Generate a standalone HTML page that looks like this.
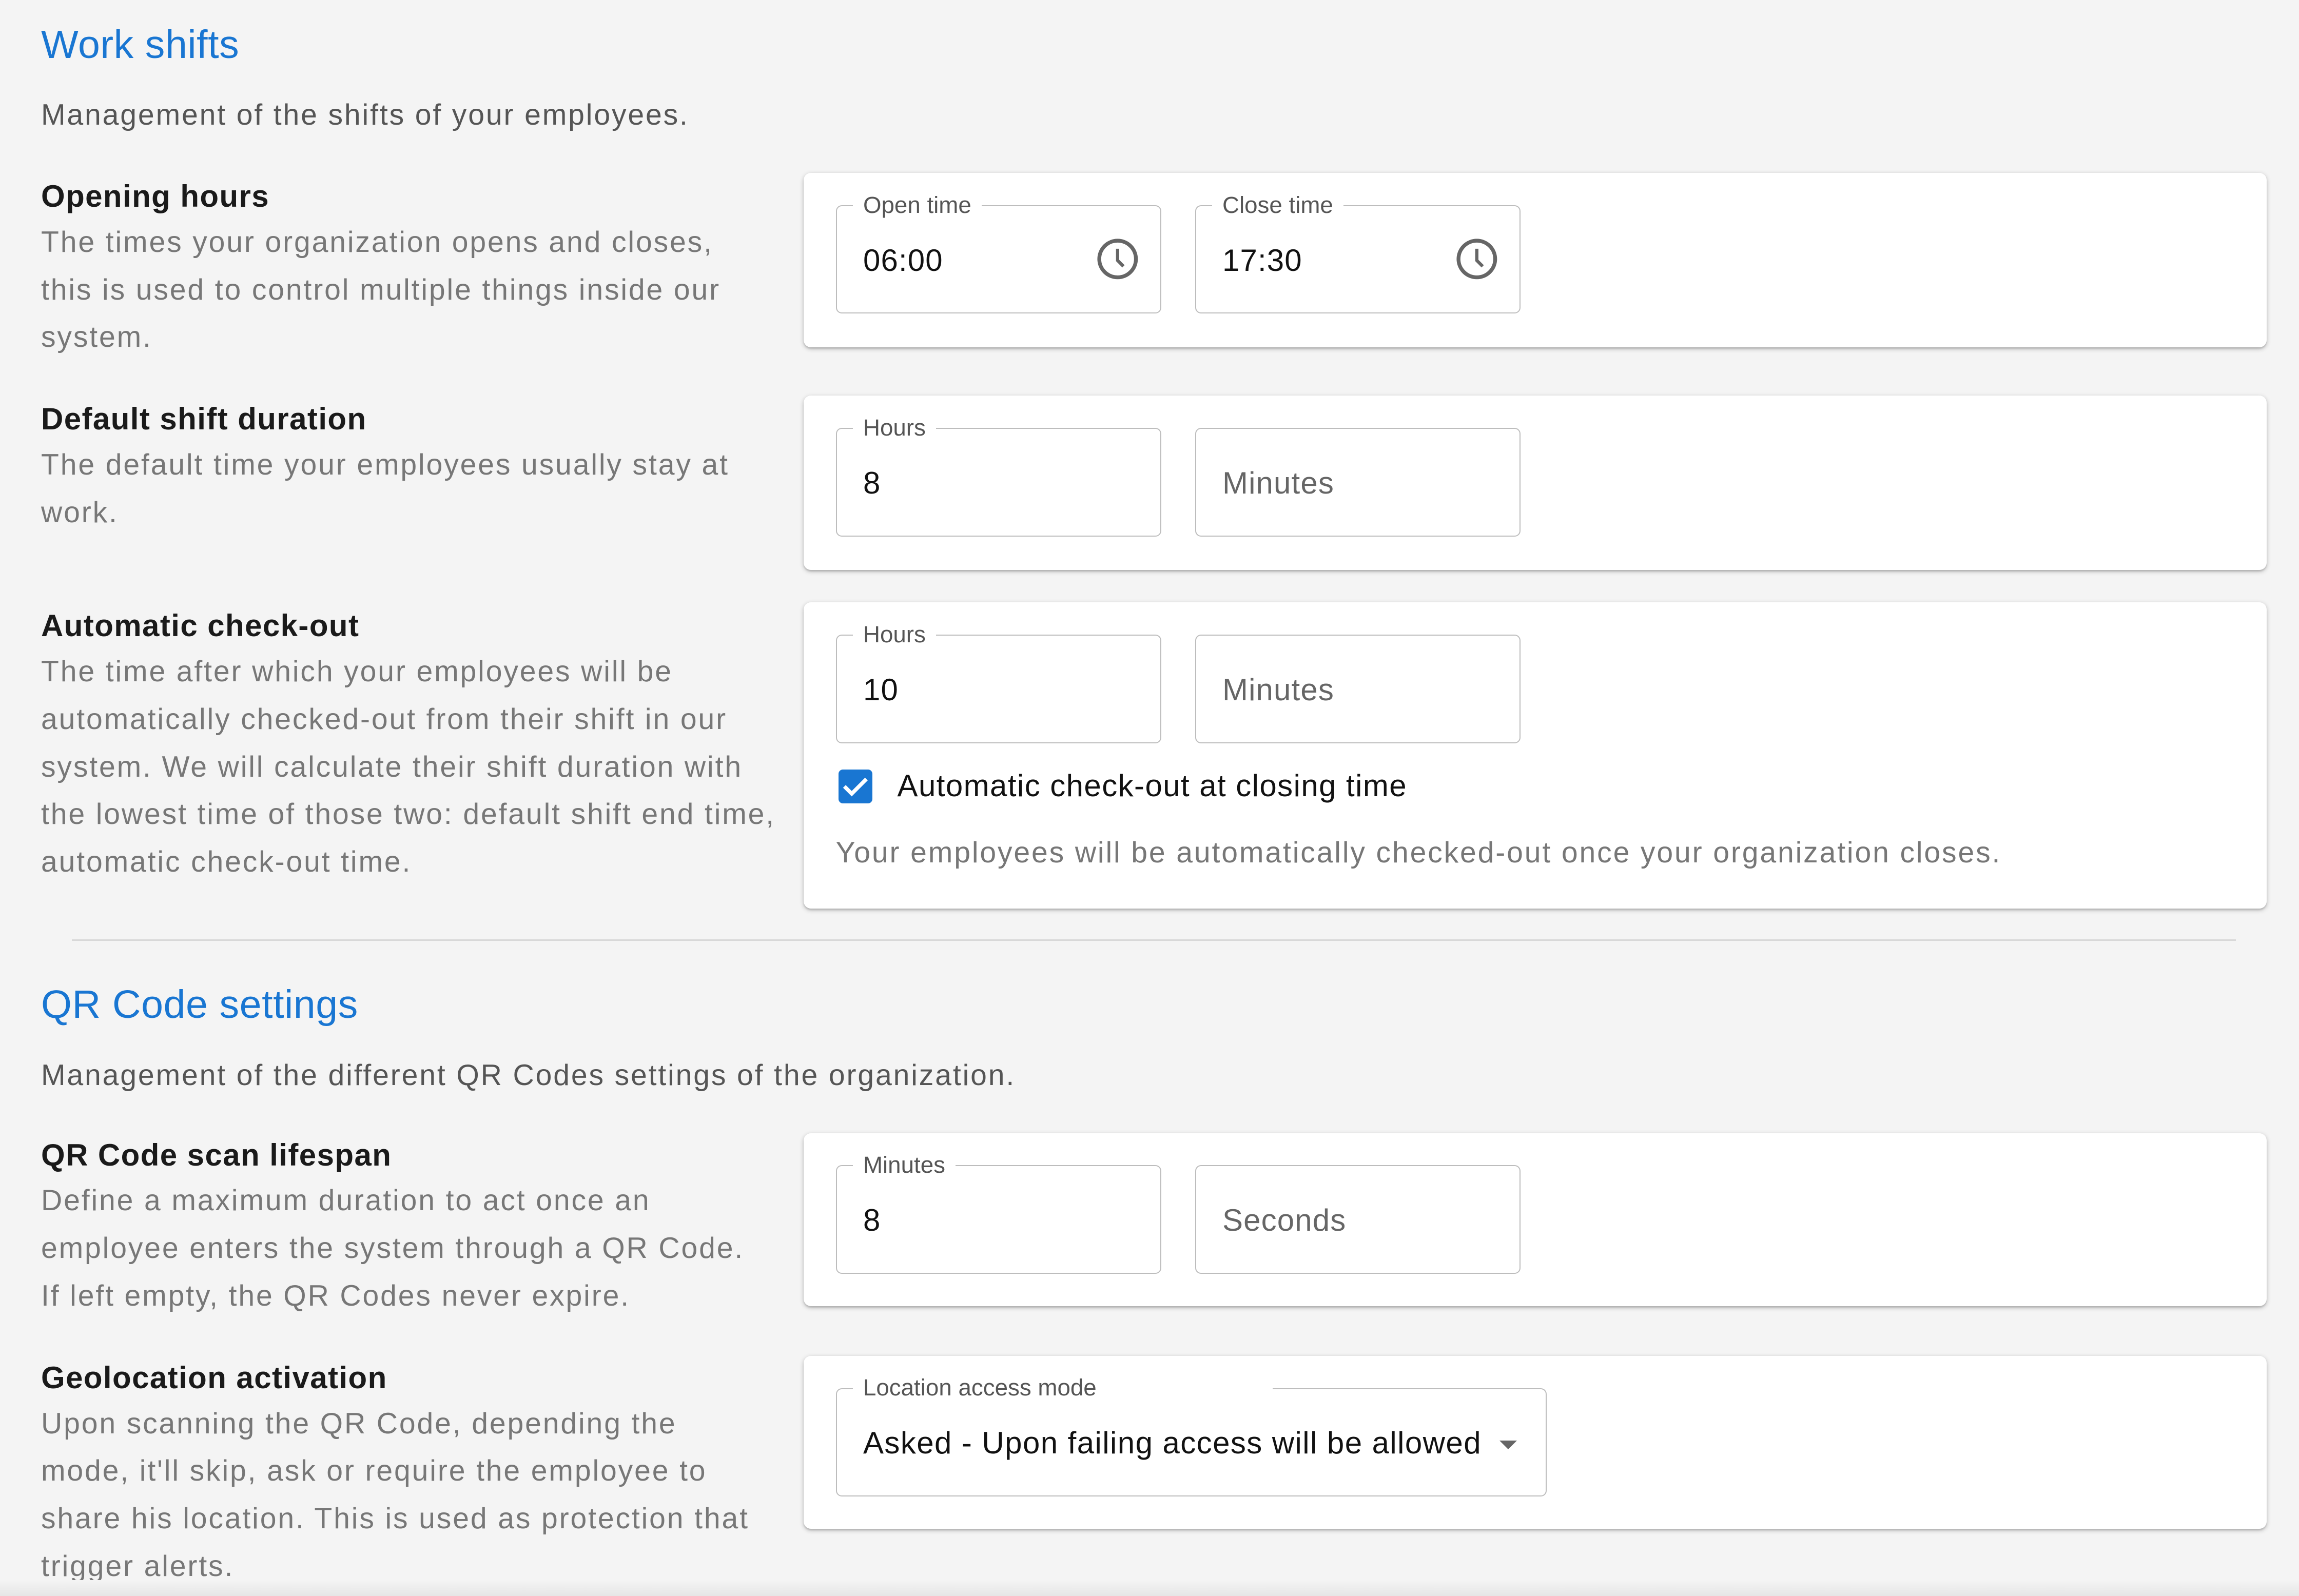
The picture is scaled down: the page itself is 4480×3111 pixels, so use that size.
<!DOCTYPE html>
<html><head><meta charset="utf-8"><style>
html,body{margin:0;padding:0}
body{width:1568px;height:1089px;zoom:2.857142;background:#f4f4f4;font-family:"Liberation Sans",Arial,sans-serif;position:relative;overflow:hidden}
.a{position:absolute}
.h1{color:#1976d2;font-size:27px;left:28px;letter-spacing:0.2px}
.sub{color:#555;font-size:20px;left:28px;letter-spacing:1px}
.lh{left:28px;width:505px}
.lh b{display:block;font-size:21px;color:#1a1a1a;line-height:30px;letter-spacing:0.5px}
.lh p{margin:0;color:#777;font-size:20px;line-height:32.5px;letter-spacing:1px}
.card{left:548px;width:998px;background:#fff;border-radius:5px;box-shadow:0 1px 3px rgba(0,0,0,.25),0 1px 1px rgba(0,0,0,.1)}
.in{position:absolute;width:222px;height:74px;border:1px solid #bdbdbd;border-radius:4px;box-sizing:border-box}
.in .lb{position:absolute;top:-11px;left:11px;background:#fff;padding:0 7px;font-size:16px;color:#555;line-height:20px}
.in .v{position:absolute;left:18px;top:24px;font-size:21px;color:#111;line-height:26px;letter-spacing:0.4px}
.in .ph{color:#666}
.clk{position:absolute;right:14px;top:21px}
</style></head><body>
<div class="a h1" style="top:15px">Work shifts</div>
<div class="a sub" style="top:67px">Management of the shifts of your employees.</div>

<div class="a lh" style="top:119px;width:500px"><b>Opening hours</b><p>The times your organization opens and closes, this is used to control multiple things inside our system.</p></div>
<div class="a card" style="top:118px;height:119px">
 <div class="in" style="left:22px;top:22px"><span class="lb">Open time</span><span class="v">06:00</span>
 <svg class="clk" width="30" height="30" viewBox="0 0 30 30"><circle cx="15" cy="15" r="12.5" fill="none" stroke="#666" stroke-width="2.6"/><path d="M15 8v8l4 4" fill="none" stroke="#666" stroke-width="2.2"/></svg></div>
 <div class="in" style="left:267px;top:22px"><span class="lb">Close time</span><span class="v">17:30</span>
 <svg class="clk" width="30" height="30" viewBox="0 0 30 30"><circle cx="15" cy="15" r="12.5" fill="none" stroke="#666" stroke-width="2.6"/><path d="M15 8v8l4 4" fill="none" stroke="#666" stroke-width="2.2"/></svg></div>
</div>

<div class="a lh" style="top:271px"><b>Default shift duration</b><p>The default time your employees usually stay at work.</p></div>
<div class="a card" style="top:270px;height:119px">
 <div class="in" style="left:22px;top:22px"><span class="lb">Hours</span><span class="v">8</span></div>
 <div class="in" style="left:267px;top:22px"><span class="v ph">Minutes</span></div>
</div>

<div class="a lh" style="top:412px"><b>Automatic check-out</b><p>The time after which your employees will be automatically checked-out from their shift in our system. We will calculate their shift duration with the lowest time of those two: default shift end time, automatic check-out time.</p></div>
<div class="a card" style="top:411px;height:209px">
 <div class="in" style="left:22px;top:22px"><span class="lb">Hours</span><span class="v">10</span></div>
 <div class="in" style="left:267px;top:22px"><span class="v ph">Minutes</span></div>
 <div class="a" style="left:24px;top:114px;width:23px;height:23px;background:#1976d2;border-radius:3px"><svg width="23" height="23" viewBox="0 0 23 23"><path d="M4 11.5l5 5 10-10" fill="none" stroke="#fff" stroke-width="2.6"/></svg></div>
 <div class="a" style="left:64px;top:113px;font-size:21px;color:#111;letter-spacing:0.5px">Automatic check-out at closing time</div>
 <div class="a" style="left:22px;top:159px;font-size:20px;color:#777;letter-spacing:1px">Your employees will be automatically checked-out once your organization closes.</div>
</div>

<div class="a" style="left:49px;top:641px;width:1476px;height:1px;background:#d8d8d8"></div>

<div class="a h1" style="top:670px">QR Code settings</div>
<div class="a sub" style="top:722px">Management of the different QR Codes settings of the organization.</div>

<div class="a lh" style="top:773px;width:495px"><b>QR Code scan lifespan</b><p>Define a maximum duration to act once an employee enters the system through a QR Code. If left empty, the QR Codes never expire.</p></div>
<div class="a card" style="top:773px;height:118px">
 <div class="in" style="left:22px;top:22px"><span class="lb">Minutes</span><span class="v">8</span></div>
 <div class="in" style="left:267px;top:22px"><span class="v ph">Seconds</span></div>
</div>

<div class="a lh" style="top:925px;width:500px"><b>Geolocation activation</b><p>Upon scanning the QR Code, depending the mode, it'll skip, ask or require the employee to share his location. This is used as protection that trigger alerts.</p></div>
<div class="a card" style="top:925px;height:118px">
 <div class="in" style="left:22px;top:22px;width:485px"><span class="lb" style="padding-right:120px">Location access mode</span><span class="v" style="letter-spacing:0.5px">Asked - Upon failing access will be allowed</span>
 <div class="a" style="left:452px;top:35px;width:0;height:0;border-left:6px solid transparent;border-right:6px solid transparent;border-top:6px solid #666"></div></div>
</div>
<div class="a" style="left:0;top:1078px;width:1568px;height:11px;background:linear-gradient(#f4f4f4,#e6e6e6)"></div>
</body></html>
